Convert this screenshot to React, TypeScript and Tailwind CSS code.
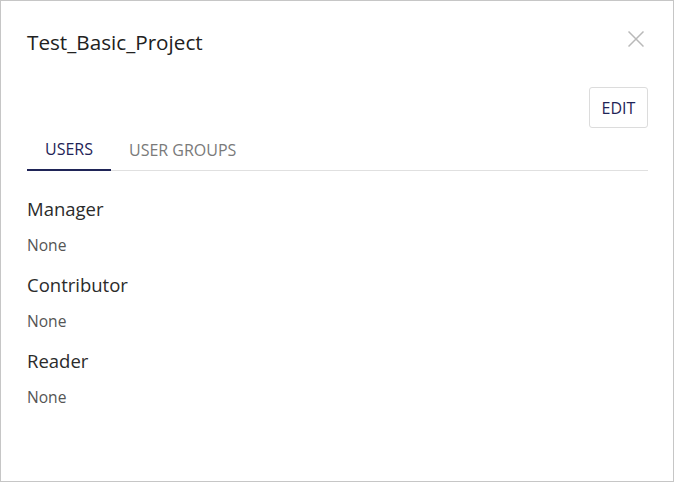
const roles = ["Manager", "Contributor", "Reader"];

export default function App() {
  return (
    <div
      className="w-[674px] h-[482px] border border-[#c6c6c6] bg-white px-[26px] pr-[25px] text-[#222]"
      style={{ fontFamily: '"Open Sans", "Noto Sans", sans-serif' }}
    >
      <div className="flex items-start justify-between pt-[27px]">
        <h1 className="text-[20.7px] leading-[28px] text-[#212121]">Test_Basic_Project</h1>
        <button className="mt-[3px] mr-[4px] text-[#b9b9b9]" aria-label="Close">
          <svg width="16" height="16" viewBox="0 0 16 16" fill="none" stroke="currentColor" strokeWidth="1.5">
            <path d="M0.5 0.5L15.5 15.5M15.5 0.5L0.5 15.5" />
          </svg>
        </button>
      </div>

      <div className="flex justify-end mt-[31px]">
        <button className="h-[41px] w-[59px] rounded-[3px] border border-[#dcdcdc] text-[16px] text-[#1f2457]">
          EDIT
        </button>
      </div>

      <div className="flex border-b border-[#e0e0e0]">
        <div className="h-[43px] -mb-px flex items-center px-[18px] border-b-2 border-[#1f2457] text-[16px] text-[#1f2457]">
          USERS
        </div>
        <div className="h-[43px] -mb-px flex items-center px-[18px] text-[16px] text-[#7a7a7a]">
          USER GROUPS
        </div>
      </div>

      <div className="pt-[26px]">
        {roles.map((role) => (
          <div key={role}>
            <div className="text-[18.5px] leading-[24px] mb-[14px] text-[#2b2b2b]">{role}</div>
            <div className="text-[15.6px] leading-[20px] mb-[18px] text-[#555]">None</div>
          </div>
        ))}
      </div>
    </div>
  );
}
